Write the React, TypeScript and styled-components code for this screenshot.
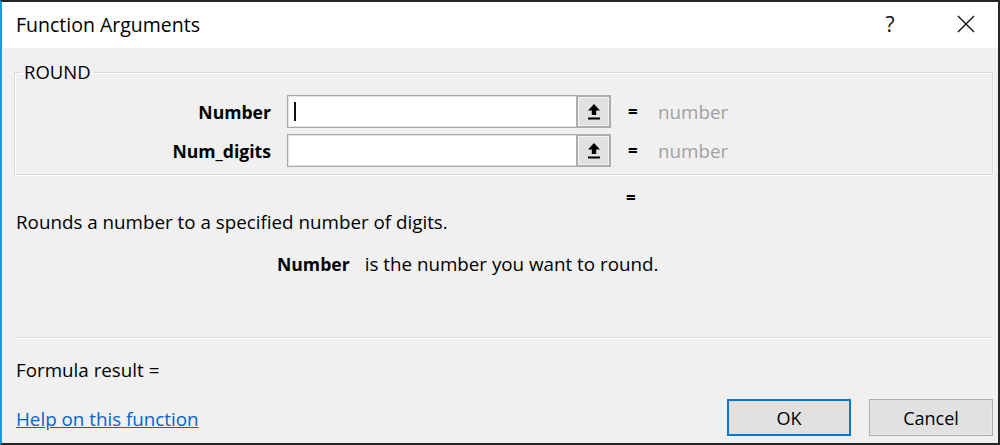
import React from "react";
import styled, { createGlobalStyle } from "styled-components";

const GlobalStyle = createGlobalStyle`
  html, body {
    margin: 0;
    padding: 0;
    background: #f0f0f0;
  }
  * {
    box-sizing: border-box;
  }
`;

const fontStack = `"Open Sans", "Noto Sans", "Liberation Sans", sans-serif`;

const SDialog = styled.div`
  width: 1000px;
  height: 445px;
  display: flex;
  flex-direction: column;
  border: 2px solid #262626;
  border-left: 2px solid #1b9bd1;
  font-family: ${fontStack};
  color: #000;
  overflow: hidden;
`;

const STitleBar = styled.div`
  height: 46px;
  background: #ffffff;
  display: flex;
  align-items: center;
  padding: 0 0 2px 14px;
  flex-shrink: 0;
`;

const STitle = styled.div`
  flex: 1;
  font-size: 19.5px;
`;

const STitleButton = styled.div<{ $w: number }>`
  width: ${(p) => p.$w}px;
  height: 46px;
  display: flex;
  align-items: center;
  justify-content: center;
  font-size: 21px;
  color: #111;
`;

const SBody = styled.div`
  flex: 1;
  background: #f0f0f0;
  display: flex;
  flex-direction: column;
  padding: 14px 5px 7px 12px;
`;

const SGroup = styled.fieldset`
  margin: 0;
  padding: 13px 0 0 0;
  border: 1px solid #d8d8d8;
  box-shadow: inset 1px 1px 0 #ffffff, 1px 1px 0 #ffffff;
  height: 113px;
`;

const SLegend = styled.legend`
  font-size: 18.5px;
  padding: 0 2px;
  margin-left: 7px;
  line-height: 20px;
`;

const SArgGrid = styled.div`
  display: grid;
  grid-template-columns: 272px 324px 47px 1fr;
  row-gap: 6px;
  align-items: center;
`;

const SArgLabel = styled.div`
  font-size: 17.6px;
  font-weight: 700;
  text-align: right;
  padding-right: 16px;
`;

const SInputBox = styled.div`
  height: 33px;
  border: 1px solid #a8a8a8;
  background: #ffffff;
  display: flex;
  align-items: stretch;
  box-shadow: inset 0 0 0 1px #e4e4e4;
`;

const SInputText = styled.div`
  flex: 1;
  display: flex;
  align-items: center;
  padding-left: 6px;
`;

const SCaret = styled.span`
  width: 2px;
  height: 19px;
  background: #111;
`;

const SRefButton = styled.div`
  width: 35px;
  background: #e1e1e1;
  border: 2px solid #adadad;
  box-shadow: inset 0 0 0 1px #f4f4f4;
  margin: -1px -1px -1px 0;
  display: flex;
  align-items: center;
  justify-content: center;
`;

const SEquals = styled.div<{ $pad?: number }>`
  font-size: 17px;
  font-weight: 700;
  padding-left: ${(p) => p.$pad ?? 17}px;
`;

const SValue = styled.div`
  font-size: 18.8px;
  color: #a0a0a0;
`;

const SResultRow = styled.div`
  padding: 10px 0 0 612px;
  height: 35px;
  display: flex;
  align-items: center;
`;

const SDescription = styled.div`
  font-size: 18.8px;
  padding-left: 2px;
  height: 24px;
  line-height: 24px;
`;

const SArgHelp = styled.div`
  display: flex;
  gap: 15px;
  padding: 18px 0 0 263px;
  font-size: 18.8px;
  line-height: 24px;
`;

const SBoldName = styled.span`
  font-weight: 700;
  font-size: 17.6px;
`;

const SSpacer = styled.div`
  flex: 1;
`;

const SSeparator = styled.div`
  height: 2px;
  border-top: 1px solid #d8d8d8;
  border-bottom: 1px solid #ffffff;
  margin-left: 2px;
`;

const SFormula = styled.div`
  font-size: 18.8px;
  padding: 19px 0 0 2px;
  line-height: 24px;
`;

const SFooter = styled.div`
  display: flex;
  align-items: center;
  padding: 17px 0 0 2px;
  gap: 18px;
`;

const SLink = styled.a`
  flex: 1;
  font-size: 18.8px;
  color: #0066cc;
  text-decoration: underline;
  margin-top: 2px;
`;

const SButton = styled.div<{ $primary?: boolean }>`
  width: 124px;
  height: 37px;
  display: flex;
  align-items: center;
  justify-content: center;
  background: #e1e1e1;
  font-size: 18px;
  border: ${(p) => (p.$primary ? "2px solid #0078d7" : "1px solid #adadad")};
  box-shadow: ${(p) => (p.$primary ? "none" : "inset 0 0 0 1px #e6e6e6")};
`;

const UpArrow = () => (
  <svg width="14" height="17" viewBox="0 0 14 17">
    <path d="M7 1 L13 7.5 L9.2 7.5 L9.2 12 L4.8 12 L4.8 7.5 L1 7.5 Z" fill="#000" />
    <rect x="1" y="14.5" width="12" height="2" fill="#000" />
  </svg>
);

const CloseIcon = () => (
  <svg width="18" height="18" viewBox="0 0 18 18">
    <path d="M1 1 L17 17 M17 1 L1 17" stroke="#111" strokeWidth="1.4" />
  </svg>
);

const args = [
  { name: "Number", focused: true },
  { name: "Num_digits", focused: false },
];

const App = () => {
  return (
    <>
      <GlobalStyle />
      <SDialog>
        <STitleBar>
          <STitle>Function Arguments</STitle>
          <STitleButton $w={100}>?</STitleButton>
          <STitleButton $w={52}>
            <CloseIcon />
          </STitleButton>
          <div style={{ width: 6 }} />
        </STitleBar>
        <SBody>
          <SGroup>
            <SLegend>ROUND</SLegend>
            <SArgGrid>
              {args.map((a) => (
                <React.Fragment key={a.name}>
                  <SArgLabel>{a.name}</SArgLabel>
                  <SInputBox>
                    <SInputText>{a.focused && <SCaret />}</SInputText>
                    <SRefButton>
                      <UpArrow />
                    </SRefButton>
                  </SInputBox>
                  <SEquals>=</SEquals>
                  <SValue>number</SValue>
                </React.Fragment>
              ))}
            </SArgGrid>
          </SGroup>
          <SResultRow>
            <SEquals $pad={0}>=</SEquals>
          </SResultRow>
          <SDescription>Rounds a number to a specified number of digits.</SDescription>
          <SArgHelp>
            <SBoldName>Number</SBoldName>
            <span>is the number you want to round.</span>
          </SArgHelp>
          <SSpacer />
          <SSeparator />
          <SFormula>Formula result =</SFormula>
          <SFooter>
            <SLink href="#">Help on this function</SLink>
            <SButton $primary>OK</SButton>
            <SButton>Cancel</SButton>
          </SFooter>
        </SBody>
      </SDialog>
    </>
  );
};

export default App;
